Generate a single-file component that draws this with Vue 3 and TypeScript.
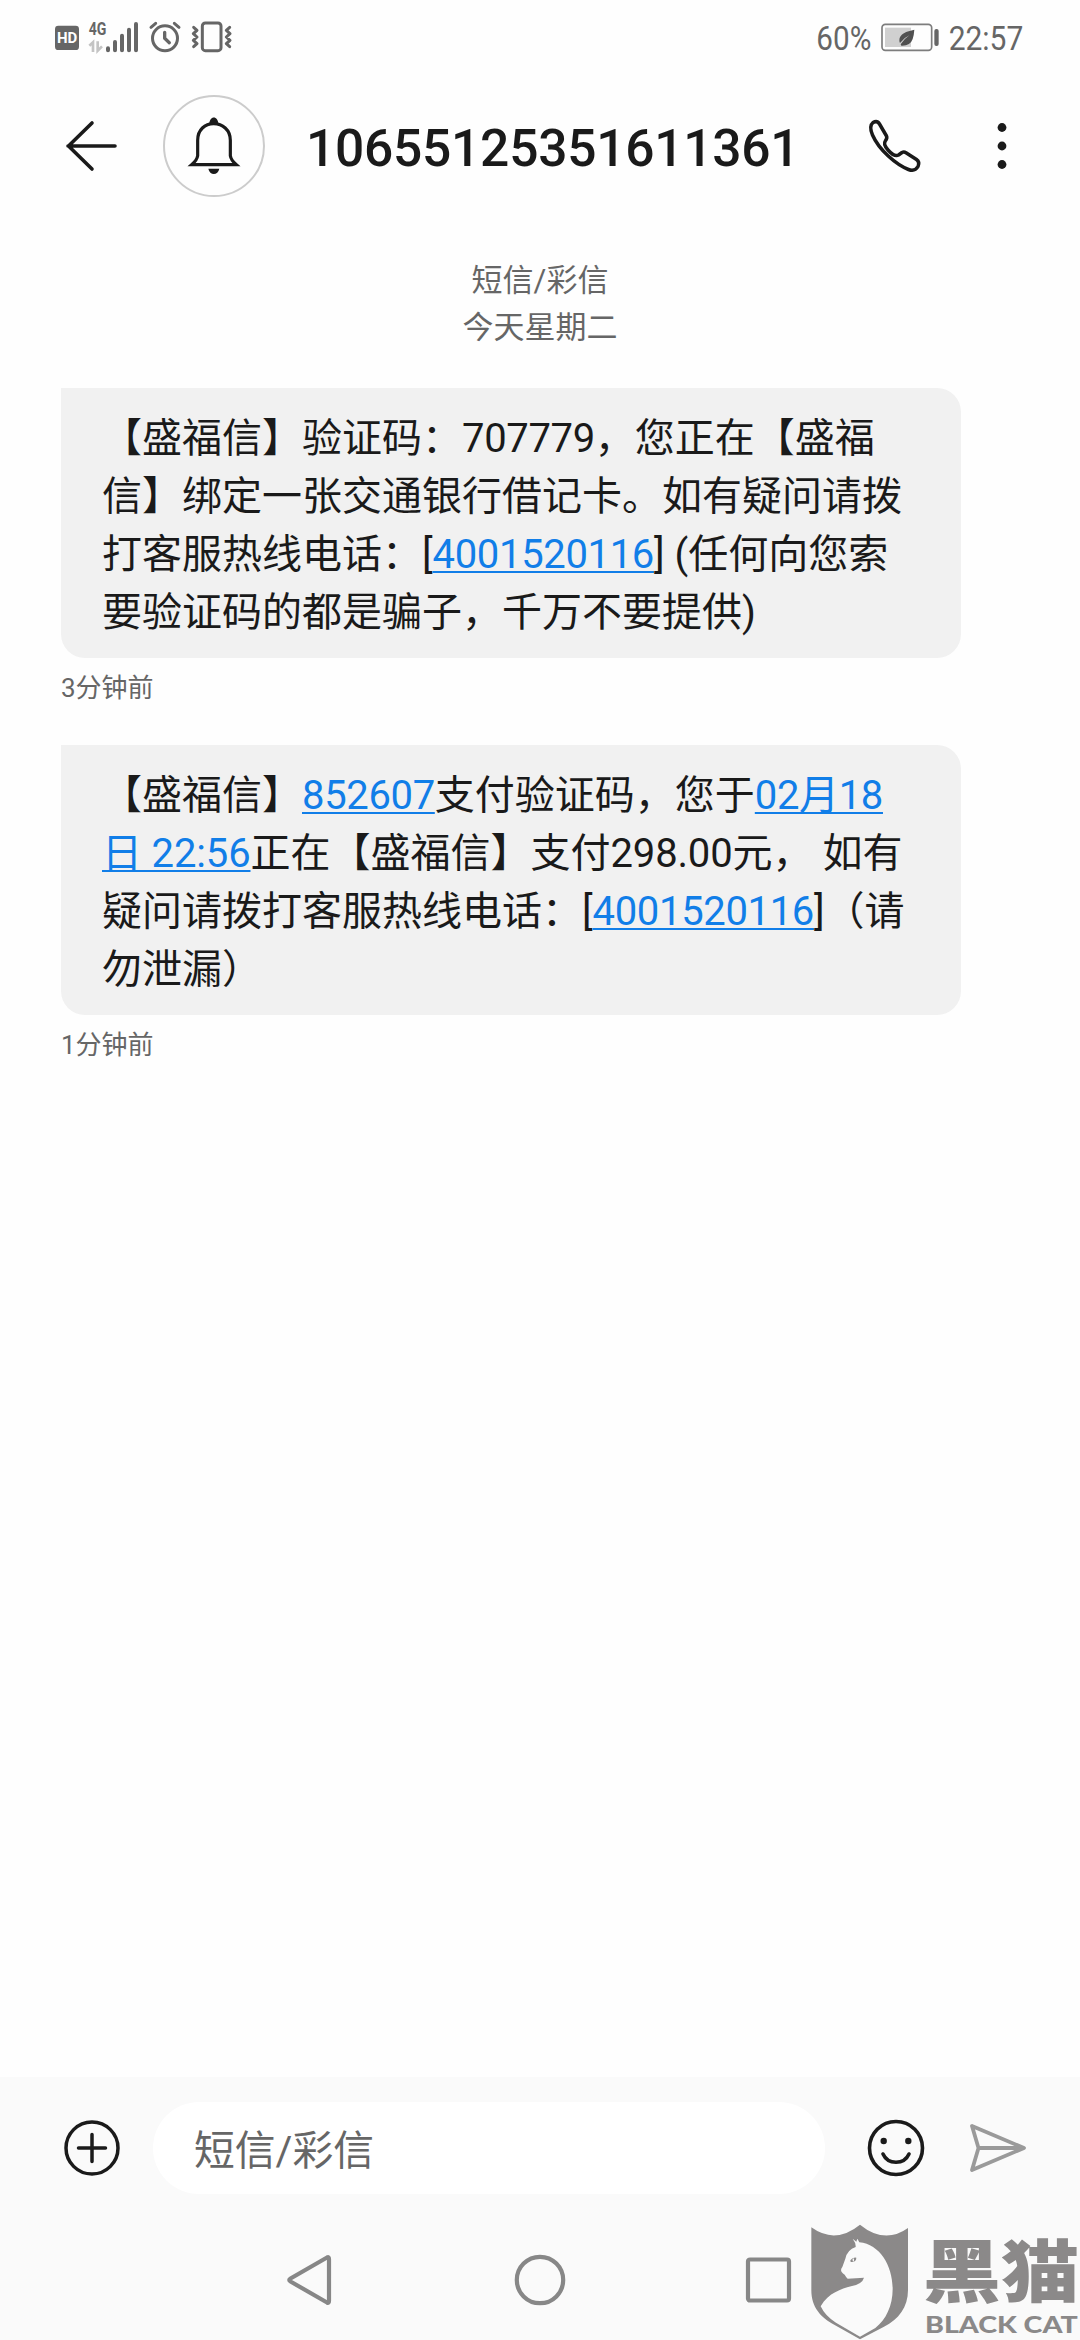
<script setup lang="ts">
interface Run {
  text: string
  link?: boolean
  kind?: 'digits' | 'mixed'
}

interface Message {
  id: number
  lines: Run[][]
  time: string
}

const sender = '10655125351611361'

const messages: Message[] = [
  {
    id: 1,
    lines: [
      [{ text: '【盛福信】验证码：' }, { text: '707779', kind: 'digits' }, { text: '，您正在【盛福' }],
      [{ text: '信】绑定一张交通银行借记卡。如有疑问请拨' }],
      [
        { text: '打客服热线电话：[' },
        { text: '4001520116', link: true, kind: 'digits' },
        { text: '] (任何向您索' },
      ],
      [{ text: '要验证码的都是骗子，千万不要提供)' }],
    ],
    time: '3分钟前',
  },
  {
    id: 2,
    lines: [
      [
        { text: '【盛福信】' },
        { text: '852607', link: true, kind: 'digits' },
        { text: '支付验证码，您于' },
        { text: '02月18', link: true, kind: 'digits' },
      ],
      [
        { text: '日 22:56', link: true, kind: 'mixed' },
        { text: '正在【盛福信】支付' },
        { text: '298.00', kind: 'mixed' },
        { text: '元， 如有' },
      ],
      [
        { text: '疑问请拨打客服热线电话：[' },
        { text: '4001520116', link: true, kind: 'digits' },
        { text: ']（请' },
      ],
      [{ text: '勿泄漏）' }],
    ],
    time: '1分钟前',
  },
]
</script>

<template>
  <div class="screen">
    <div class="status">
      <div class="status-group">
        <svg width="24" height="34" viewBox="45 60 72 102">
          <rect x="45" y="77" width="72" height="73" rx="10" fill="#666" />
          <text x="51" y="129" font-size="42" font-weight="700" fill="#fff" textLength="61" lengthAdjust="spacingAndGlyphs">HD</text>
        </svg>
        <svg width="51" height="34" viewBox="144 60 153 102">
          <text x="146" y="106" font-size="55" font-weight="700" fill="#666" textLength="53" lengthAdjust="spacingAndGlyphs">4G</text>
          <g fill="none" stroke="#c4c4c4" stroke-width="8">
            <path d="M148 137l11-10v29M173 124v28l13-13" />
          </g>
          <g stroke="#666" stroke-width="12" stroke-linecap="round">
            <path d="M204 145v6M225 126v25M246 107v44M267 89v62M288 72v79" />
          </g>
        </svg>
        <svg width="33" height="34" viewBox="324 60 99 102">
          <g fill="none" stroke="#666" stroke-width="9" stroke-linecap="round" stroke-linejoin="round">
            <circle cx="375" cy="115" r="37.500" />
            <path d="M374 97v18l14 13" stroke-width="10" />
            <path d="M333 82l14-12M403 70l14 12" stroke-width="9" />
          </g>
        </svg>
        <svg width="43" height="34" viewBox="450 60 129 102">
          <g fill="none" stroke="#666" stroke-linecap="round" stroke-linejoin="round">
            <rect x="487" y="69" width="56" height="83" rx="9" stroke-width="9" />
            <path d="M461 82l10 9-11 10 11 10-11 10 11 10-10 9M569 82l-10 9 11 10-11 10 11 10-11 10 10 9" stroke-width="9" />
          </g>
        </svg>
      </div>
      <div class="status-group">
        <svg width="54" height="34" viewBox="81 60 162 102">
          <text x="79" y="151" font-size="102" fill="#666" textLength="165" lengthAdjust="spacingAndGlyphs">60%</text>
        </svg>
        <svg width="60" height="34" viewBox="270 60 180 102">
          <rect x="276" y="73" width="149" height="78" rx="10" fill="none" stroke="#7d7d7d" stroke-width="5" />
          <rect x="285" y="83" width="78" height="58" fill="#d0d0d0" />
          <rect x="433" y="87" width="13" height="51" rx="6" fill="#666" />
          <path d="M373 89C350 94 328 101 328 121Q328 126 330 129Q344 112 358 106Q342 117 332 133L334 137Q361 138 368 117Q372 105 373 89Z" fill="#505050" />
        </svg>
        <svg width="74" height="34" viewBox="477 60 222 102">
          <text x="476" y="151" font-size="102" fill="#666" textLength="224" lengthAdjust="spacingAndGlyphs">22:57</text>
        </svg>
      </div>
    </div>

    <header class="header">
      <svg class="back" width="54" height="54" viewBox="0 0 54 54">
        <path d="M50 27H3M27 4L3.500 27L27 50" fill="none" stroke="#1a1a1a" stroke-width="3.600" stroke-linecap="round" stroke-linejoin="round" />
      </svg>
      <div class="avatar">
        <svg width="50" height="58" viewBox="446 110 150 174">
          <path d="M454 253Q470 239 472 226V180C472 148 494 130 520 130S570 148 570 180V226Q572 239 588 253Z" fill="none" stroke="#1a1a1a" stroke-width="9.500" />
          <path d="M507 132C507 105 534 105 534 132ZM504 265H537C533 286 508 286 504 265Z" fill="#1a1a1a" />
        </svg>
      </div>
      <h1 class="title">{{ sender }}</h1>
      <svg class="phone" width="54" height="54" viewBox="0 0 54 54">
        <path
          d="M5 3.500C8 1.800 10 2.500 11.500 5L18.500 17C19.500 19 18.800 20 17.300 22C15.500 24.500 16.500 27 20 31C24.500 36 28 37.500 30.500 36L34 33.500C35.500 32.700 36.500 32.800 38 33.700L48.500 40.500C51 42.200 51.300 44.500 50 47.500C48 51 44.500 52 40.500 50.500C28 45.500 11 31 4.500 16C2 10 2 6 5 3.500Z"
          fill="none" stroke="#1a1a1a" stroke-width="3.500" stroke-linejoin="round"
        />
      </svg>
      <svg class="more" width="10" height="50" viewBox="0 0 10 50" fill="#1a1a1a">
        <circle cx="5" cy="6.500" r="4.400" />
        <circle cx="5" cy="25" r="4.400" />
        <circle cx="5" cy="43.500" r="4.400" />
      </svg>
    </header>

    <main class="thread">
      <div class="meta">
        <div>短信/彩信</div>
        <div>今天星期二</div>
      </div>
      <section v-for="m in messages" :key="m.id" class="message">
        <div class="bubble">
          <div v-for="(line, i) in m.lines" :key="i" class="line"><span
            v-for="(run, j) in line" :key="j" :class="[run.kind, { link: run.link }]"
          >{{ run.text }}</span></div>
        </div>
        <div class="time">{{ m.time }}</div>
      </section>
    </main>

    <footer class="footer">
      <div class="composer">
        <svg class="plus" width="58" height="58" viewBox="0 0 58 58" fill="none" stroke="#1a1a1a" stroke-width="3.500" stroke-linecap="round">
          <circle cx="29" cy="29" r="26" />
          <path d="M29 15.500v27M15.500 29h27" />
        </svg>
        <div class="input">短信/彩信</div>
        <svg class="smile" width="58" height="58" viewBox="0 0 58 58">
          <g fill="none" stroke="#1a1a1a" stroke-width="3.600" stroke-linecap="round">
            <circle cx="29" cy="29" r="26.500" />
            <path d="M16 35C21 46 37 46 42 35" />
          </g>
          <circle cx="16.700" cy="22" r="3.200" fill="#1a1a1a" />
          <circle cx="41.300" cy="22" r="3.200" fill="#1a1a1a" />
        </svg>
        <svg class="send" width="60" height="52" viewBox="0 0 60 52">
          <path d="M4 4L56 26L4 48L10.500 26ZM10.500 26H56" fill="none" stroke="#9a9a9a" stroke-width="3.800" stroke-linejoin="round" />
        </svg>
      </div>
      <nav class="nav">
        <svg width="60" height="60" viewBox="0 0 60 60"><path d="M46 7.500Q48 6.500 48 9V51Q48 53.500 46 52.500L9.500 31.500Q7 30 9.500 28.500Z" /></svg>
        <svg width="60" height="60" viewBox="0 0 60 60"><circle cx="30" cy="30" r="23.200" /></svg>
        <svg width="60" height="60" viewBox="0 0 60 60"><rect x="9" y="9.500" width="41" height="41" rx="2" /></svg>
      </nav>
    </footer>

    <svg class="watermark" width="280" height="130" viewBox="0 0 840 390">
      <path d="M34 52Q106 104 180 44Q254 104 324 54V240C324 292 296 328 252 350L180 388L104 345C62 322 34 292 34 240Z" fill="#8b8989" />
      <path
        d="M158 86L169 95L172 86L178 97C240 103 278 168 278 237C278 287 258 329 226 354L180 380L108 338Q76 319 62 289C86 248 124 237 153 229Q187 222 192 203L143 206Q137 200 134 194C121 186 121 178 127 171L136 146Q142 119 167 111Q168 99 158 86Z"
        fill="#fafafa"
      />
      <path d="M151 151Q158 141 169 143Q169 157 152 156Z" fill="#8b8989" />
      <path d="M159 144Q155 150 160 155Q165 149 159 144Z" fill="#fafafa" />
      <text class="brand" transform="translate(368 260) scale(1 .92)" font-size="224" textLength="470" lengthAdjust="spacingAndGlyphs">黑猫</text>
      <text class="brand-en" x="375" y="368" font-size="68" textLength="458" lengthAdjust="spacingAndGlyphs">BLACK CAT</text>
    </svg>
  </div>
</template>

<style>
body {
  background: #fff;
}
</style>

<style scoped>
.screen {
  position: relative;
  display: flex;
  flex-direction: column;
  width: 1080px;
  height: 2340px;
  overflow: hidden;
  background: #fefefe;
  color: #1a1a1a;
  font-family: Roboto, 'Noto Sans CJK SC', sans-serif;
  text-spacing-trim: space-all;
}
svg {
  display: block;
  flex: none;
  overflow: visible;
}
.status {
  display: flex;
  justify-content: space-between;
  height: 80px;
  padding: 20px 57px 0 55px;
  box-sizing: border-box;
}
.status-group {
  display: flex;
  gap: 9px;
}
.header {
  display: flex;
  align-items: center;
  height: 132px;
}
.back {
  margin-left: 65px;
}
.avatar {
  display: flex;
  align-items: center;
  justify-content: center;
  width: 102px;
  height: 102px;
  margin-left: 44px;
  box-sizing: border-box;
  border: 2px solid #ccc;
  border-radius: 50%;
}
.title {
  flex: 1;
  margin: 6px 0 0 41px;
  font-size: 51.500px;
  line-height: 60px;
  font-weight: 500;
  letter-spacing: -0.25px;
  white-space: nowrap;
}
.phone {
  margin-right: 75px;
}
.more {
  margin-right: 73px;
}
.thread {
  flex: 1;
  padding: 45px 0 0 61px;
}
.meta {
  height: 131px;
  margin-right: 61px;
  color: #666;
  font-size: 31px;
  line-height: 47px;
  text-align: center;
}
.meta div {
  height: 47px;
}
.message {
  height: 357px;
}
.bubble {
  width: 900px;
  height: 270px;
  padding: 22px 41px 16px;
  box-sizing: border-box;
  border-radius: 0 24px 24px 24px;
  background: #f1f1f1;
}
.line {
  height: 58px;
  font-size: 40px;
  line-height: 58px;
  white-space: pre;
}
.digits {
  letter-spacing: -0.35px;
}
.mixed {
  letter-spacing: -0.15px;
}
.link {
  color: #117ee8;
  text-decoration: underline;
  text-decoration-thickness: 2px;
  text-underline-offset: 3px;
  text-decoration-skip-ink: none;
}
.time {
  margin-top: 10px;
  color: #666;
  font-size: 26px;
  line-height: 40px;
}
.footer {
  height: 263px;
  background: #fafafa;
}
.composer {
  display: flex;
  align-items: center;
  height: 142px;
}
.plus {
  margin-left: 63px;
}
.input {
  width: 672px;
  height: 92px;
  margin-left: 32px;
  padding: 3px 0 0 41px;
  box-sizing: border-box;
  border-radius: 46px;
  background: #fff;
  color: #666;
  font-size: 40.800px;
  line-height: 92px;
}
.smile {
  margin-left: 42px;
}
.send {
  margin-left: 43px;
}
.nav {
  display: flex;
  justify-content: center;
  gap: 169px;
  padding-top: 31px;
}
.nav svg {
  fill: none;
  stroke: #878787;
  stroke-width: 4.200;
}
.watermark {
  position: absolute;
  right: 0;
  bottom: 0;
  fill: #8b8989;
}
.brand {
  font-family: 'Noto Sans CJK SC', sans-serif;
  font-weight: 900;
}
.brand-en {
  font-family: Lato, sans-serif;
  font-weight: 900;
}
</style>
